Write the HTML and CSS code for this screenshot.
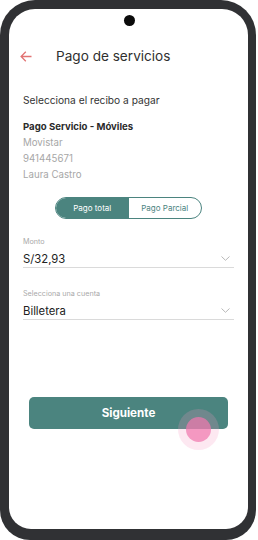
FILE: index.html
```html
<!DOCTYPE html>
<html lang="es">
<head>
<meta charset="utf-8">
<title>Pago de servicios</title>
<link rel="stylesheet" href="styles.css">
</head>
<body>
<div class="phone">
  <div class="screen">
    <div class="camera"></div>
    <header class="topbar">
      <svg class="back" width="12" height="11" viewBox="0 0 12 11" aria-hidden="true">
        <path d="M11.5 5.5H1.2M5.8 0.8L1.1 5.5L5.8 10.2" fill="none" stroke="#e27373" stroke-width="1.3"/>
      </svg>
      <h1 class="title">Pago de servicios</h1>
    </header>
    <main class="content">
      <p class="subtitle">Selecciona el recibo a pagar</p>
      <section class="receipt">
        <div class="receipt-title">Pago Servicio - Móviles</div>
        <div class="receipt-line">Movistar</div>
        <div class="receipt-line">941445671</div>
        <div class="receipt-line">Laura Castro</div>
      </section>
      <div class="toggle">
        <div class="seg seg-active">Pago total</div>
        <div class="seg">Pago Parcial</div>
      </div>
      <div class="field field-first">
        <div class="field-label">Monto</div>
        <div class="field-row">
          <span class="field-value">S/32,93</span>
          <svg class="chev" width="9" height="5" viewBox="0 0 9 5" aria-hidden="true"><path d="M0.5 0.5L4.5 4.3L8.5 0.5" fill="none" stroke="#b8b8b8" stroke-width="1"/></svg>
        </div>
      </div>
      <div class="field field-second">
        <div class="field-label">Selecciona una cuenta</div>
        <div class="field-row">
          <span class="field-value">Billetera</span>
          <svg class="chev" width="9" height="5" viewBox="0 0 9 5" aria-hidden="true"><path d="M0.5 0.5L4.5 4.3L8.5 0.5" fill="none" stroke="#b8b8b8" stroke-width="1"/></svg>
        </div>
      </div>
      <button class="primary">Siguiente</button>
    </main>
    <div class="touch"><div class="touch-core"></div></div>
  </div>
</div>
</body>
</html>
```
FILE: styles.css
```css
* { box-sizing: border-box; }
html, body { margin: 0; padding: 0; background: #ffffff; }
body { font-family: "Inter", "Noto Sans", sans-serif; color: #2e2e2e; }

.phone {
  width: 256px;
  height: 540px;
  margin-left: 0;
  padding: 9px 8px 11px 9px;
  background: #303134;
  border-radius: 35px 35px 30px 30px;
}

.screen {
  position: relative;
  width: 239px;
  height: 520px;
  background: #ffffff;
  border-radius: 26px 26px 22px 22px;
  overflow: hidden;
}

.camera {
  position: absolute;
  left: 114.5px;
  top: 5.5px;
  width: 11px;
  height: 11px;
  border-radius: 50%;
  background: #0b0b0b;
}

.topbar {
  display: flex;
  align-items: center;
  gap: 24px;
  padding: 37px 0 0 11px;
  height: 57px;
}
.back { display: block; flex: none; }
.title {
  margin: 0;
  font-size: 13.6px;
  font-weight: 400;
  line-height: 20px;
  color: #2f2f2f;
}

.content {
  display: flex;
  flex-direction: column;
  padding: 0 14px;
}

.subtitle {
  margin: 26px 0 0;
  font-size: 10.2px;
  line-height: 16px;
  color: #333;
}

.receipt { margin-top: 11px; }
.receipt-title {
  font-size: 9.6px;
  font-weight: 700;
  line-height: 16px;
  color: #2a2a2a;
}
.receipt-line {
  font-size: 9.7px;
  line-height: 16px;
  color: #a7a7a7;
}

.toggle {
  align-self: center;
  display: flex;
  margin-top: 14px;
  width: 147px;
  height: 22px;
  border: 1px solid #4b847f;
  border-radius: 11px;
  overflow: hidden;
}
.seg {
  flex: 1;
  display: flex;
  align-items: center;
  justify-content: center;
  font-size: 8px;
  color: #4b847f;
}
.seg-active { background: #4b847f; color: #ffffff; }

.field-first { margin-top: 17px; }
.field-second { margin-top: 20px; }
.field-label {
  font-size: 7.2px;
  line-height: 11px;
  color: #a9a9a9;
}
.field-row {
  display: flex;
  align-items: center;
  justify-content: space-between;
  margin-top: 3px;
  height: 18px;
  border-bottom: 1px solid #dadada;
  padding-right: 4px;
}
.field-value {
  font-size: 11.3px;
  line-height: 16px;
  color: #222;
}
.chev { display: block; }

.primary {
  margin: 77px 6px 0;
  height: 32px;
  border: 0;
  border-radius: 5px;
  background: #4b847f;
  color: #ffffff;
  font-family: inherit;
  font-size: 11.6px;
  font-weight: 700;
  padding: 0;
}

.touch {
  position: absolute;
  left: 169px;
  top: 400px;
  width: 41px;
  height: 41px;
  border-radius: 50%;
  background: rgba(244, 150, 190, 0.22);
  display: flex;
  align-items: center;
  justify-content: center;
}
.touch-core {
  width: 25px;
  height: 25px;
  border-radius: 50%;
  background: rgba(240, 120, 175, 0.72);
}
```
